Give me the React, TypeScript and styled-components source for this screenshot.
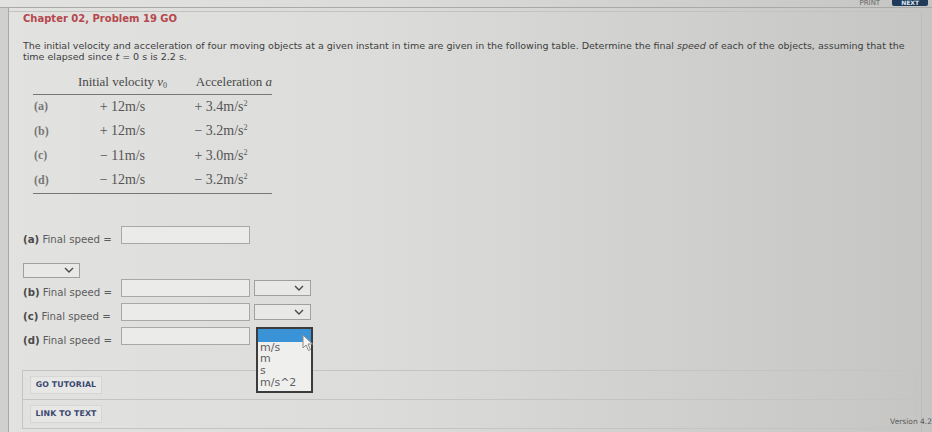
import React from 'react'
import styled, { createGlobalStyle } from 'styled-components'

const GlobalStyle = createGlobalStyle`
  html, body {
    margin: 0;
    padding: 0;
    height: 432px;
    overflow: hidden;
  }
  body {
    background: linear-gradient(90deg, #e2e2e0 0%, #dcdcda 40%, #d0d0ce 72%, #c5c5c3 100%);
    font-family: "DejaVu Sans", Verdana, sans-serif;
  }
`

const rows = [
  { label: '(a)', v: '+ 12m/s', a: '+ 3.4m/s' },
  { label: '(b)', v: '+ 12m/s', a: '\u2212 3.2m/s' },
  { label: '(c)', v: '\u2212 11m/s', a: '+ 3.0m/s' },
  { label: '(d)', v: '\u2212 12m/s', a: '\u2212 3.2m/s' },
]

const units = ['m/s', 'm', 's', 'm/s^2']

const Arrow = () => (
  <svg width="10" height="6" viewBox="0 0 10 6">
    <path d="M1 1 L5 5 L9 1" fill="none" stroke="#4a4a4a" strokeWidth="1.4" />
  </svg>
)

const Cursor = () => (
  <svg width="12" height="18" viewBox="0 0 12 18">
    <path d="M1 1 L1 14 L4 11 L6.5 16.5 L8.5 15.5 L6 10 L10.5 10 Z" fill="#f4f4f4" stroke="#8a8a8a" strokeWidth="1" />
  </svg>
)

const App = () => {
  return (
    <>
      <GlobalStyle />
      <Page>
        <TopBar>
          <TopLink>PRINT</TopLink>
          <NextButton>NEXT</NextButton>
        </TopBar>
        <Frame>
          <Gutter />
          <Panel>
            <Title>Chapter 02, Problem 19 GO</Title>
            <Question>
              The initial velocity and acceleration of four moving objects at a given instant in time are given in the following table. Determine the final <em>speed</em> of each of the objects, assuming that the time elapsed since <em>t</em> = 0 s is 2.2 s.
            </Question>
            <DataTable>
              <thead>
                <tr>
                  <HeadCell />
                  <HeadCell>Initial velocity <i>v</i><sub>0</sub></HeadCell>
                  <HeadCell>Acceleration <i>a</i></HeadCell>
                </tr>
              </thead>
              <tbody>
                {rows.map((r, i) => (
                  <tr key={r.label}>
                    <LabelCell last={i === rows.length - 1}>{r.label}</LabelCell>
                    <ValueCell last={i === rows.length - 1}>{r.v}</ValueCell>
                    <ValueCell last={i === rows.length - 1}>{r.a}<sup>2</sup></ValueCell>
                  </tr>
                ))}
              </tbody>
            </DataTable>

            <Answers>
              <AnswerRow>
                <AnswerLabel><b>(a)</b> Final speed =</AnswerLabel>
                <TextBox />
              </AnswerRow>
              <LoneSelect><Arrow /></LoneSelect>
              <AnswerRow>
                <AnswerLabel><b>(b)</b> Final speed =</AnswerLabel>
                <TextBox />
                <UnitSelect><Arrow /></UnitSelect>
              </AnswerRow>
              <AnswerRow>
                <AnswerLabel><b>(c)</b> Final speed =</AnswerLabel>
                <TextBox />
                <UnitSelect><Arrow /></UnitSelect>
              </AnswerRow>
              <AnswerRow>
                <AnswerLabel><b>(d)</b> Final speed =</AnswerLabel>
                <TextBox />
                <SelectSlot>
                  <OpenList>
                    <Highlight />
                    {units.map(u => (
                      <Option key={u}>{u}</Option>
                    ))}
                    <CursorWrap><Cursor /></CursorWrap>
                  </OpenList>
                </SelectSlot>
              </AnswerRow>
            </Answers>

            <ToolBox first>
              <ToolButton>GO TUTORIAL</ToolButton>
            </ToolBox>
            <ToolBox first={false}>
              <ToolButton>LINK TO TEXT</ToolButton>
            </ToolBox>
          </Panel>
        </Frame>
        <Version>Version 4.2</Version>
      </Page>
    </>
  )
}

const Page = styled.div`
  position: relative;
  width: 932px;
  height: 432px;
`

const TopBar = styled.div`
  height: 7px;
  display: flex;
  justify-content: flex-end;
  align-items: flex-start;
  gap: 12px;
  padding-right: 4px;
  border-bottom: 1px solid #a9aaa8;
  overflow: hidden;
`

const TopLink = styled.span`
  font-size: 7px;
  color: #666;
  line-height: 7px;
`

const NextButton = styled.span`
  background: #203a5a;
  color: #dfe6ee;
  font-size: 6px;
  font-weight: bold;
  padding: 0 9px;
  line-height: 6px;
  height: 6px;
  border-radius: 0 0 2px 2px;
`

const Frame = styled.div`
  display: flex;
  height: 424px;
`

const Gutter = styled.div`
  width: 8px;
  flex: none;
  background: #d0d0ce;
  border-right: 1px solid #a8a8a6;
`

const Panel = styled.div`
  flex: 1;
  margin-top: 3px;
  margin-right: 10px;
  border-top: 1px solid #c2c2c0;
  border-right: 1px solid #bdbdbb;
  padding: 1px 0 0 14px;
`

const Title = styled.div`
  color: #b5474c;
  font-weight: bold;
  font-size: 10px;
  line-height: 12px;
`

const Question = styled.p`
  margin: 14.5px 0 0;
  font-size: 9.5px;
  line-height: 11px;
  color: #3e3e3e;
  width: 895px;

  em {
    font-style: italic;
  }
`

const DataTable = styled.table`
  margin: 12px 0 0 10px;
  border-collapse: collapse;
  table-layout: fixed;
  width: 239px;
  font-family: "Liberation Serif", "Times New Roman", serif;
  color: #4a4a4a;

  sub {
    font-size: 8px;
    vertical-align: -2px;
  }
  sup {
    font-size: 8px;
    vertical-align: 5px;
    line-height: 0;
  }
`

const HeadCell = styled.th`
  font-weight: normal;
  font-size: 13px;
  padding: 0 0 3px;
  height: 17px;
  border-bottom: 1.5px solid #777;
  text-align: center;
  white-space: nowrap;

  &:first-child {
    width: 42px;
  }
  &:nth-child(2) {
    width: 95px;
  }
  &:nth-child(3) {
    width: 102px;
    text-align: right;
  }
`

const LabelCell = styled.td<{ last: boolean }>`
  font-weight: bold;
  font-size: 12px;
  color: #777;
  padding: 0 0 0 1px;
  height: 24.5px;
  border-bottom: ${p => (p.last ? '1.5px solid #777' : 'none')};
`

const ValueCell = styled.td<{ last: boolean }>`
  text-align: center;
  font-size: 14px;
  height: 24.5px;
  padding: 0;
  white-space: nowrap;
  color: #555;
  border-bottom: ${p => (p.last ? '1.5px solid #777' : 'none')};
`

const Answers = styled.div`
  margin-top: 32px;
  display: flex;
  flex-direction: column;
`

const AnswerRow = styled.div`
  display: flex;
  align-items: flex-end;
  height: 18px;

  & + & {
    margin-top: 6px;
  }
`

const AnswerLabel = styled.span`
  font-size: 10.2px;
  color: #5c5c5c;
  width: 98px;
  flex: none;
  line-height: 12px;
  margin-bottom: -2px;
  white-space: nowrap;

  b {
    color: #4a4a4a;
  }
`

const TextBox = styled.div`
  width: 127px;
  height: 16px;
  border: 1px solid #a8a8a8;
  background: #ebebea;
`

const SelectBox = styled.div`
  box-sizing: border-box;
  width: 57px;
  height: 16px;
  border: 1px solid #a0a0a0;
  background: #e8e8e7;
  display: flex;
  align-items: center;
  justify-content: flex-end;
  padding-right: 6px;
`

const LoneSelect = styled(SelectBox)`
  margin-top: 19px;
  margin-bottom: 1px;
  height: 15px;
  padding-right: 5px;
`

const UnitSelect = styled(SelectBox)`
  margin-left: 4px;
  margin-bottom: 1px;
`

const SelectSlot = styled.div`
  position: relative;
  width: 57px;
  height: 18px;
  margin-left: 6px;
  align-self: flex-start;
`

const OpenList = styled.div`
  position: absolute;
  left: 0;
  top: 0;
  box-sizing: border-box;
  width: 57px;
  height: 66px;
  border: 2px solid #3a3c3e;
  background: #efefee;
  z-index: 2;
  display: flex;
  flex-direction: column;
`

const Highlight = styled.div`
  height: 13px;
  background: #3a93d6;
  flex: none;
`

const Option = styled.div`
  font-size: 11px;
  line-height: 11.7px;
  color: #606060;
  padding-left: 2px;
`

const CursorWrap = styled.div`
  position: absolute;
  left: 44px;
  top: 5px;
`

const ToolBox = styled.div<{ first: boolean }>`
  height: 28px;
  border: 1px solid #c4c4c2;
  border-top-width: ${p => (p.first ? '1px' : '0')};
  display: flex;
  align-items: center;
  padding-left: 7px;
  margin-right: 4px;
  margin-top: ${p => (p.first ? '25px' : '0')};
  margin-left: -1px;
`

const ToolButton = styled.span`
  display: inline-flex;
  align-items: center;
  justify-content: center;
  width: 70px;
  height: 16px;
  background: #e7e7e6;
  border: 1px solid #d6d6d4;
  color: #3a4870;
  font-weight: bold;
  font-size: 7.8px;
  letter-spacing: 0.1px;
`

const Version = styled.div`
  position: absolute;
  right: 0;
  bottom: 6px;
  font-size: 7.5px;
  color: #5a5a5a;
`

export default App
